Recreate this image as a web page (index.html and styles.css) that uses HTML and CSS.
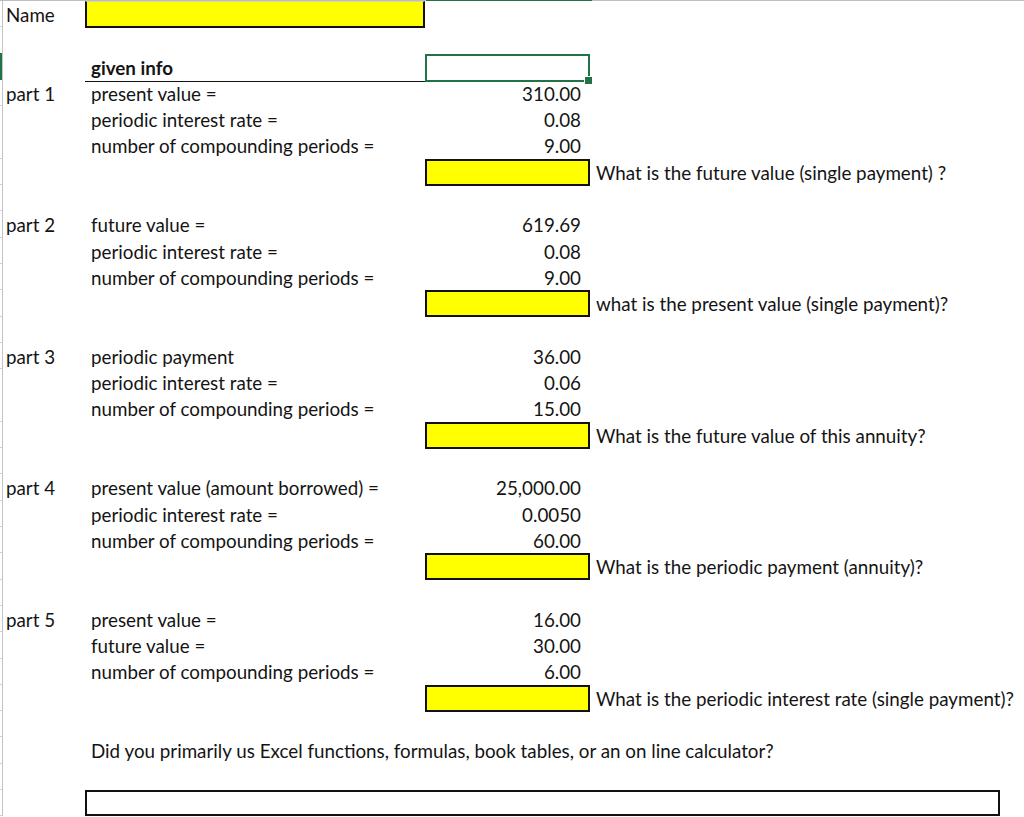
FILE: index.html
```html
<!DOCTYPE html>
<html>
<head>
<meta charset="utf-8">
<title>Time value of money worksheet</title>
<link rel="stylesheet" href="styles.css">
</head>
<body>
<div class="topline"><span class="tl-a"></span><span class="tl-sel"></span><span class="tl-b"></span></div>
<div class="sheet">
  <div class="rowhdr"></div>
  <div class="grid">
    <div class="row"><div class="c">Name</div><div class="c namebox"></div><div class="c"></div><div class="c"></div></div>
    <div class="row"><div class="c"></div><div class="c"></div><div class="c"></div><div class="c"></div></div>
    <div class="row"><div class="c"></div><div class="c given">given info</div><div class="c sel"></div><div class="c"></div></div>

    <div class="row"><div class="c">part 1</div><div class="c">present value =</div><div class="c num">310.00</div><div class="c"></div></div>
    <div class="row"><div class="c"></div><div class="c">periodic interest rate =</div><div class="c num">0.08</div><div class="c"></div></div>
    <div class="row"><div class="c"></div><div class="c">number of compounding periods =</div><div class="c num">9.00</div><div class="c"></div></div>
    <div class="row"><div class="c"></div><div class="c"></div><div class="c ans"></div><div class="c q">What is the future value (single payment) ?</div></div>
    <div class="row"><div class="c"></div><div class="c"></div><div class="c"></div><div class="c"></div></div>

    <div class="row"><div class="c">part 2</div><div class="c">future value =</div><div class="c num">619.69</div><div class="c"></div></div>
    <div class="row"><div class="c"></div><div class="c">periodic interest rate =</div><div class="c num">0.08</div><div class="c"></div></div>
    <div class="row"><div class="c"></div><div class="c">number of compounding periods =</div><div class="c num">9.00</div><div class="c"></div></div>
    <div class="row"><div class="c"></div><div class="c"></div><div class="c ans"></div><div class="c q">what is the present value (single payment)?</div></div>
    <div class="row"><div class="c"></div><div class="c"></div><div class="c"></div><div class="c"></div></div>

    <div class="row"><div class="c">part 3</div><div class="c">periodic payment</div><div class="c num">36.00</div><div class="c"></div></div>
    <div class="row"><div class="c"></div><div class="c">periodic interest rate =</div><div class="c num">0.06</div><div class="c"></div></div>
    <div class="row"><div class="c"></div><div class="c">number of compounding periods =</div><div class="c num">15.00</div><div class="c"></div></div>
    <div class="row"><div class="c"></div><div class="c"></div><div class="c ans"></div><div class="c q">What is the future value of this annuity?</div></div>
    <div class="row"><div class="c"></div><div class="c"></div><div class="c"></div><div class="c"></div></div>

    <div class="row"><div class="c">part 4</div><div class="c">present value (amount borrowed) =</div><div class="c num">25,000.00</div><div class="c"></div></div>
    <div class="row"><div class="c"></div><div class="c">periodic interest rate =</div><div class="c num">0.0050</div><div class="c"></div></div>
    <div class="row"><div class="c"></div><div class="c">number of compounding periods =</div><div class="c num">60.00</div><div class="c"></div></div>
    <div class="row"><div class="c"></div><div class="c"></div><div class="c ans"></div><div class="c q">What is the periodic payment (annuity)?</div></div>
    <div class="row"><div class="c"></div><div class="c"></div><div class="c"></div><div class="c"></div></div>

    <div class="row"><div class="c">part 5</div><div class="c">present value =</div><div class="c num">16.00</div><div class="c"></div></div>
    <div class="row"><div class="c"></div><div class="c">future value =</div><div class="c num">30.00</div><div class="c"></div></div>
    <div class="row"><div class="c"></div><div class="c">number of compounding periods =</div><div class="c num">6.00</div><div class="c"></div></div>
    <div class="row"><div class="c"></div><div class="c"></div><div class="c ans"></div><div class="c q">What is the periodic interest rate (single payment)?</div></div>
    <div class="row"><div class="c"></div><div class="c"></div><div class="c"></div><div class="c"></div></div>

    <div class="row"><div class="c"></div><div class="c">Did you primarily us Excel functions, formulas, book tables, or an on line calculator?</div><div class="c"></div><div class="c"></div></div>
    <div class="row"><div class="c"></div><div class="c"></div><div class="c"></div><div class="c"></div></div>
    <div class="row"><div class="c"></div><div class="c answerbox"></div></div>
  </div>
</div>
</body>
</html>
```

FILE: styles.css
```css
* { box-sizing: border-box; }

body {
  margin: 0;
  background: #ffffff;
  font-family: Lato, "Liberation Sans", sans-serif;
  font-size: 18.8px;
  color: #141414;
  overflow: hidden;
}

.topline {
  display: flex;
  height: 1px;
}
.tl-a { width: 426px; background: #bdbdbd; }
.tl-sel { width: 166px; background: #217346; }
.tl-b { flex: 1; background: #bdbdbd; }

.sheet {
  display: flex;
}

.rowhdr {
  width: 3px;
  border-right: 1px solid #c4c4c4;
  background:
    linear-gradient(#217346, #217346) 0 52px / 2px 27px no-repeat,
    repeating-linear-gradient(to bottom, transparent 0 25.3px, #d2d2d2 25.3px 26.3px);
}

.grid {
  flex: 1;
}

.row {
  display: grid;
  grid-template-columns: 82px 340px 165px 1fr;
  height: 26.3px;
}

.c {
  padding: 1px 6px 0;
  line-height: 26px;
  white-space: nowrap;
}

.row > .c:first-child {
  padding-left: 3px;
}

.num {
  text-align: right;
  padding-right: 9px;
}

.given {
  font-weight: bold;
  border-bottom: 1px solid #111;
}

.sel {
  position: relative;
  border: 2px solid #217346;
}
.sel::after {
  content: "";
  position: absolute;
  right: -5px;
  bottom: -5px;
  width: 7px;
  height: 7px;
  background: #217346;
  border: 1px solid #ffffff;
}

.namebox {
  background: #ffff00;
  border: 2px solid #111;
  border-top: 1px solid #d8d8a0;
}

.ans {
  background: #ffff00;
  border: 2px solid #111;
}

.q {
  padding-left: 6px;
}

.answerbox {
  grid-column: 2 / 5;
  margin-right: 24px;
  border: 2px solid #111;
  background: #fff;
}
```
